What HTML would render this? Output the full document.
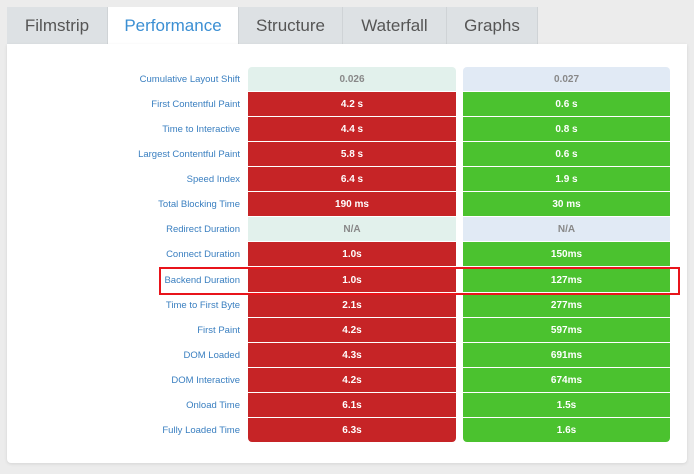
<!DOCTYPE html>
<html><head><style>
body{margin:0;width:694px;height:474px;background:#ececec;font-family:"Liberation Sans",sans-serif;position:relative;overflow:hidden}
.tab{position:absolute;top:7px;height:37px;background:#dde1e4;color:#555;font-size:17px;line-height:37px;text-align:center;border-right:1px solid #cfd3d6}
.tab.on{background:#fff;color:#3b8fd3}
.panel{position:absolute;left:7px;top:44px;width:680px;height:419px;background:#fff;border-radius:0 0 4px 4px;box-shadow:0 1px 3px rgba(0,0,0,.1)}
.lab{position:absolute;right:454px;width:200px;text-align:right;font-size:9.5px;color:#3a7fc0;height:24px;line-height:26px}
.c{position:absolute;height:24px;line-height:26px;text-align:center;font-size:10px;font-weight:bold;color:#fff}
.a{left:248px;width:208px}.b{left:463px;width:207px}
.r{background:#c62426}.g{background:#4bc22f}
</style></head><body>
<div class="tab" style="left:7px;width:100px">Filmstrip</div>
<div class="tab on" style="left:108px;width:130px">Performance</div>
<div class="tab" style="left:239px;width:103px">Structure</div>
<div class="tab" style="left:343px;width:103px">Waterfall</div>
<div class="tab" style="left:447px;width:90px">Graphs</div>
<div class="panel"></div>
<div id="rows"></div>
<script>
var d=[["Cumulative Layout Shift","0.026","0.027","n"],["First Contentful Paint","4.2 s","0.6 s"],["Time to Interactive","4.4 s","0.8 s"],["Largest Contentful Paint","5.8 s","0.6 s"],["Speed Index","6.4 s","1.9 s"],["Total Blocking Time","190 ms","30 ms"],["Redirect Duration","N/A","N/A","n"],["Connect Duration","1.0s","150ms"],["Backend Duration","1.0s","127ms"],["Time to First Byte","2.1s","277ms"],["First Paint","4.2s","597ms"],["DOM Loaded","4.3s","691ms"],["DOM Interactive","4.2s","674ms"],["Onload Time","6.1s","1.5s"],["Fully Loaded Time","6.3s","1.6s"]];
var h="";d.forEach(function(r,i){var y=67+i*25.07;
h+='<div class="lab" style="top:'+y+'px">'+r[0]+'</div>';
var ra=i==0?'border-radius:4px 4px 0 0;':i==14?'border-radius:0 0 4px 4px;':'';
if(r[3]){h+='<div class="c a" style="top:'+y+'px;background:#e2f1ec;color:#888;'+ra+'">'+r[1]+'</div><div class="c b" style="top:'+y+'px;background:#e1eaf5;color:#888;'+ra+'">'+r[2]+'</div>';}
else h+='<div class="c a r" style="top:'+y+'px;'+ra+'">'+r[1]+'</div><div class="c b g" style="top:'+y+'px;'+ra+'">'+r[2]+'</div>';});
h+='<div style="position:absolute;left:159px;top:267px;width:517px;height:24px;border:2px solid #e8141b"></div>';
document.getElementById("rows").innerHTML=h;
</script>
</body></html>
